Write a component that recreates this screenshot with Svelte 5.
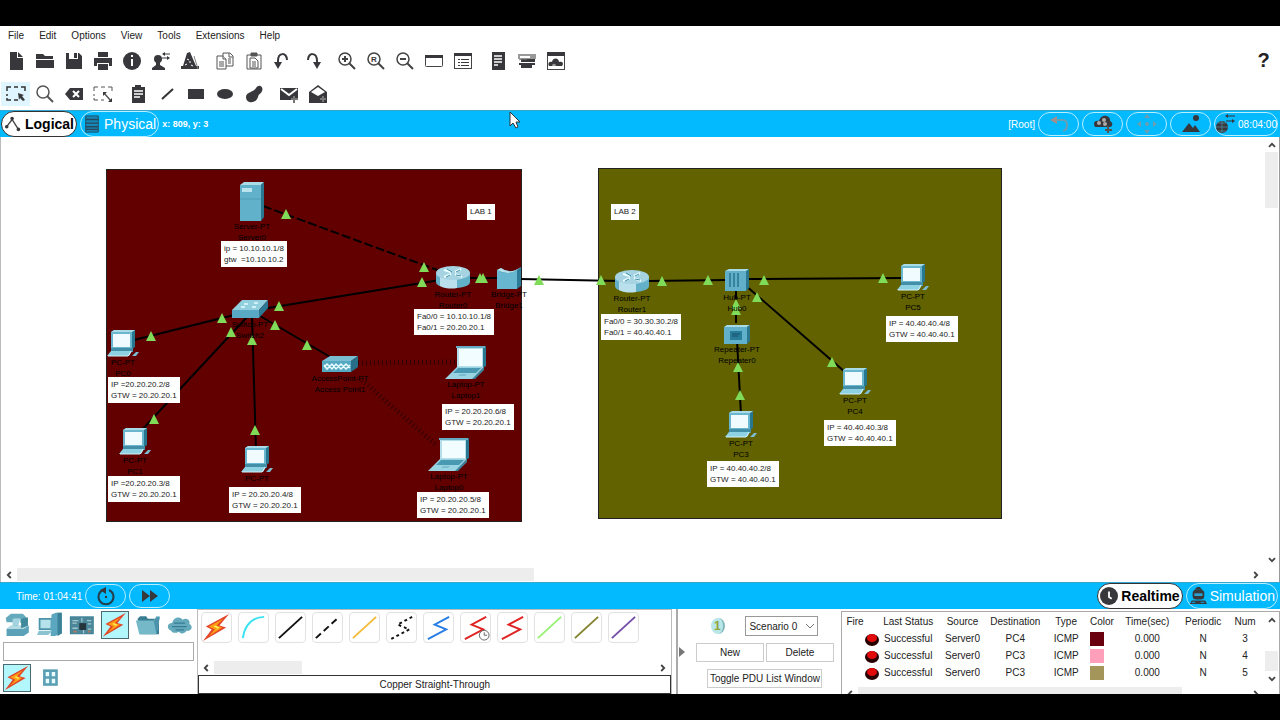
<script>
    const menus = ['File', 'Edit', 'Options', 'View', 'Tools', 'Extensions', 'Help'];

    // inner markup of each 20x20 icon
    const icons = {
        newFile: '<path d="M4 1h7v6h6v12H4z"/><path d="M12 1l5 5h-5z"/>',
        open: '<path d="M1 3h7l2 2h8v3H1z"/><path d="M1 9h18v8H1z"/>',
        save: '<path d="M2 2h3v6h9V2h1l3 3v13H2z"/><path d="M10 2h3v5h-3z"/>',
        print: '<path d="M5 1h10v5H5zM1 7h18v8h-3v-3H4v3H1zM5 13h10v6H5z"/>',
        info: '<circle cx="10" cy="10" r="9"/><path d="M9 8h2v7H9zM9 4h2v2H9z" fill="#fff"/>',
        user: '<circle cx="7" cy="8" r="4"/><path d="M5 10h4v4l5 3v2H1v-2l4-3z"/><path d="M12 3h7M11 7h7" stroke="#38383c"/><path d="M11 3l3-2v4zM19 7l-3-2v4z"/>',
        wizard: '<path d="M7 2l3-1 6 14h3v3H1v-3h2z"/><path d="M7 8l2 1M9 11h2M5 14l2-1M11 14l2 1" stroke="#fff"/><path d="M14 5l4 13" stroke="#888" stroke-width="1"/>',
        copy: '<g fill="#fff" stroke="#555"><path d="M8 2h7l3 3v10H8z"/><path d="M2 5h6l3 3v10H2z"/><path d="M8 5v3h3M4 11h5M4 13h5M4 15h5M14 2v4h4M13 8h3M13 10h3M13 12h3"/></g>',
        paste: '<g fill="#fff" stroke="#555"><path d="M3 4h14v14H3z"/><path d="M7 2h6v3H7z" fill="#555"/><path d="M6 7h5l3 3v7H6zM8 11h4M8 13h4M8 15h4"/></g>',
        undo: '<path d="M14 9c0-8-9-8-9 1v2" fill="none" stroke="#38383c" stroke-width="2"/><path d="M1 11h8l-4 7z"/>',
        redo: '<path d="M6 9c0-8 9-8 9 1v2" fill="none" stroke="#38383c" stroke-width="2"/><path d="M19 11h-8l4 7z"/>',
        zoomIn: '<g fill="none" stroke="#444"><circle cx="8" cy="8" r="6" stroke-width="1.5"/><path d="M12 12l6 6M5 8h6M8 5v6" stroke-width="2"/></g>',
        zoomReset: '<g fill="none" stroke="#444"><circle cx="8" cy="8" r="6" stroke-width="1.5"/><path d="M12 12l6 6" stroke-width="2"/></g><text x="8" y="11" font-size="8" font-weight="bold" text-anchor="middle">R</text>',
        zoomOut: '<g fill="none" stroke="#444"><circle cx="8" cy="8" r="6" stroke-width="1.5"/><path d="M12 12l6 6M5 8h6" stroke-width="2"/></g>',
        window: '<rect x="1.5" y="4.5" width="17" height="11" rx="1" fill="none" stroke="#444"/><path d="M1 4h18v3H1z"/>',
        list: '<rect x="1.5" y="2.5" width="17" height="15" fill="none" stroke="#444"/><path d="M1 2h18v3H1zM5 8h2v1H5zM5 11h2v1H5zM5 14h2v1H5zM8 8h8v1H8zM8 11h8v1H8zM8 14h8v1H8z"/>',
        doc: '<path d="M4 1h13v18H4z"/><path d="M6 5h8M6 8h8M6 11h8M6 14h4" stroke="#fff" stroke-width="1.5"/>',
        devices: '<path d="M1 3h18v5H1z" fill="#999"/><path d="M3 5h10v2H3z" fill="#fff"/><path d="M4 8h14v3H4z"/><path d="M2 12h16v2H2zM4 14h11v3H4z"/><path d="M2 9l3-1h5" stroke="#888"/>',
        cloudWin: '<rect x="1.5" y="1.5" width="17" height="17" fill="none" stroke="#444"/><path d="M1 1h18v4H1z"/><path d="M3 15c-2-4 2-5 3-4 1-5 7-4 7 0 4-1 5 2 3 4z"/><path d="M6 15c0-3 4-3 4 0z" fill="#999"/>',
        select: '<path d="M1 7V3h4M8 3h4M15 3h4v4M1 10v2M1 14v2h4M8 16h4" fill="none" stroke="#333" stroke-width="1.5"/><path d="M12 9l6 2-2 1 3 4-2 1-3-3-1 2z"/>',
        inspect: '<circle cx="8" cy="8" r="6" fill="none" stroke="#555" stroke-width="1.5"/><path d="M12 12l6 6" stroke="#555" stroke-width="2"/>',
        remove: '<path d="M1 10l5-6h13v12H6z"/><path d="M9 7l6 6M15 7l-6 6" stroke="#fff" stroke-width="2"/>',
        resize: '<path d="M1 7V3h4M8 3h4M15 3h4v4M1 10v2M1 14v2h4M8 16h3" fill="none" stroke="#555"/><path d="M11 9l7 8" stroke="#555" stroke-width="1.5"/><path d="M10 8h4l-4 4zM19 18v-4l-4 4z"/>',
        note: '<path d="M4 3h3V1h6v2h4v16H4z"/><path d="M6 7h9M6 10h9M6 13h6" stroke="#fff" stroke-width="1.5"/>',
        line: '<path d="M5 15L16 5" stroke="#333" stroke-width="2"/>',
        rect: '<path d="M2 5h16v10H2z"/>',
        ellipse: '<ellipse cx="10" cy="10" rx="8" ry="5"/>',
        freeform: '<path d="M12 4c3-5 8-1 6 3-1 3-3 2-4 6-2 7-12 7-12 0 0-5 8-5 10-9z"/>',
        mail: '<path d="M1 4h18v12H1z"/><path d="M2 5l8 6 8-6" fill="none" stroke="#fff" stroke-width="2"/><path d="M12 15h7M15 12v7" stroke="#777" stroke-width="2"/>',
        mailOpen: '<path d="M1 8l9-7 9 7v11H1z"/><path d="M3 8l7-5 7 5-7 4z" fill="#fff"/><path d="M12 15h6M15 12v6" stroke="#777" stroke-width="2"/>',
        logical: '<path d="M3 13l6-8 7 11" fill="none" stroke="#444" stroke-width="1.5"/><circle cx="3" cy="13" r="2"/><circle cx="9" cy="4" r="2"/><circle cx="16" cy="16" r="2"/>',
        physical: '<path d="M3 1h14v18H3z" fill="#1688b8" stroke="#26485c"/><path d="M3 5h14M3 9h14M3 13h14M3 16h14" stroke="#26485c" stroke-width="1.5"/>',
        back: '<path d="M1 6l7-4v8z" fill="#a08f8d"/><path d="M7 6h7q4 0 4 5t-4 6" fill="none" stroke="#6d9db0" stroke-width="2"/>',
        cloudAdd: '<path d="M2 13c-3-5 1-7 4-6 2-8 12-6 11 0 4 2 2 6 0 6z"/><g fill="#aaa"><circle cx="6" cy="9" r="2"/><circle cx="11" cy="6" r="2"/><circle cx="12" cy="10" r="2"/></g><path d="M12 16h7M15 12v7" stroke="#555" stroke-width="2"/>',
        move: '<path d="M10 0l3 4H7zM10 20l3-4H7zM0 10l4-3v6zM20 10l-4-3v6z" fill="#6d9db0"/><circle cx="10" cy="10" r="2" fill="#6d9db0"/>',
        landscape: '<path d="M1 18l7-9 4 5 2-3 5 7z"/><circle cx="15" cy="4" r="3"/>',
        globe: '<circle cx="7" cy="13" r="6"/><path d="M1 13h12M7 7v12M3 9h8M3 17h8" stroke="#5595ad" stroke-width=".7"/><path d="M12 2h8M11 7h8" stroke="#333"/><path d="M10 2l3-2v4zM20 7l-3-2v4z"/>',
        reset: '<path d="M7 4a7.5 7.5 0 1 0 6 0" fill="none" stroke="#23404c" stroke-width="2"/><path d="M10 1v7L4 4z"/><circle cx="10" cy="11" r="1.2"/>',
        forward: '<path d="M2 4l8 6-8 6zM10 4l8 6-8 6z"/>',
        clock: '<circle cx="10" cy="10" r="10"/><path d="M10 5v6l3 2" fill="none" stroke="#fff" stroke-width="2"/>',
        simulation: '<path d="M6 3l3-3h3l3 3z"/><rect x="4" y="3" width="13" height="11" rx="4"/><path d="M6 7h9v3H6z" fill="#2ba1d0"/><path d="M3 15h15l2 4H1z"/><path d="M3 17h4M13 17h4" stroke="#09b4f5"/>',
        left: '<path d="M13 5l-5 5 5 5" fill="none" stroke="#444" stroke-width="3"/>',
        right: '<path d="M7 5l5 5-5 5" fill="none" stroke="#444" stroke-width="3"/>',
        up: '<path d="M5 13l5-5 5 5" fill="none" stroke="#444" stroke-width="3"/>',
        down: '<path d="M5 7l5 5 5-5" fill="none" stroke="#444" stroke-width="3"/>',
    };

    const bolt = '<path d="M28 1L4 14l6 3-9 12 24-14-7-2z" fill="#e2452a"/><path d="M22 6L7 14l6 3-6 7 14-9-6-2z" fill="#ff9d13"/><path d="M17 11l-5 3 4 2-2 2 4-3-4-2z" fill="#ffec55"/>';

    // 30x30 drawings for the device categories
    const categoryIcons = {
        network: '<path d="M2 7l6-5h14l4 4v7h-7V8h-7v4H3z" fill="#65aabc"/><path d="M10 8h9l-3 10h-6z" fill="#a2d4df"/><path d="M3 20l5-4h21v8l-6 4H3z" fill="#5ba2b8"/><path d="M3 20l5-4h21l-6 4z" fill="#b4dbe4"/><path d="M20 8l8-2v10l-8 3z" fill="#3f899d"/>',
        end: '<path d="M3 8h14v12H3z" fill="#b5e2eb" stroke="#4b95aa" stroke-width="2"/><path d="M17 3l5-2h7v24l-8 3h-5V17z" fill="#5ba7bf"/><path d="M24 1h5v24l-5 3z" fill="#3b8298"/><path d="M2 22h16l-5 5H0z" fill="#8cc3d1"/>',
        board: '<path d="M1 5h28v21H1z" fill="#3c8298"/><path d="M2 6h26v19H2z" fill="#4b8699"/><path d="M12 13h8v8h-8z" fill="#26343b"/><path d="M4 10h7M4 13h5M21 10h5M22 14h4M4 19h6M22 20h4M15 7v5M17 21v4" stroke="#a3c9d0" stroke-width="1.5"/><path d="M5 22h4v2H5zM22 22h3v2h-3z" fill="#b67b5c"/>',
        bolt,
        folder: '<path d="M3 8l3-3h7l2 3h13v18H6z" fill="#387d92"/><path d="M1 10h21l3-5h4l-4 21H5z" fill="#75b9c8"/><path d="M22 11l3-5h4l-4 20z" fill="#4c94ab"/>',
        cloud: '<path d="M5 22c-6-2-5-9 1-9 2-8 10-8 12-4 5-3 10 1 8 5 5 2 3 9-3 8-3 4-7 4-9 1-4 2-8 2-9-1z" fill="#65aabc"/><path d="M8 13h13M6 17h17M10 21h10" stroke="#377d93" stroke-width="1.5"/>',
        grid: '<rect x="7" y="5" width="17" height="19" fill="#5a9fb4"/><path d="M10 8h4v5h-4zM17 8h4v5h-4zM10 16h4v5h-4zM17 16h4v5h-4z" fill="#e8fbff"/>',
    };

    const fileTools = [
        ['newFile', 'open', 'save', 'print', 'info', 'user', 'wizard'],
        ['copy', 'paste', 'undo', 'redo'],
        ['zoomIn', 'zoomReset', 'zoomOut', 'window', 'list'],
        ['doc', 'devices', 'cloudWin'],
    ];
    const drawTools = [
        ['select', 'inspect', 'remove', 'resize'],
        ['note', 'line', 'rect', 'ellipse', 'freeform'],
        ['mail', 'mailOpen'],
    ];
    const viewTools = ['back', 'cloudAdd', 'move', 'landscape'];

    const shapes = {
        server: { w: 26, h: 40, art: '<path d="M1 4l4-3h20l-3 3z" fill="#a9dbe7"/><path d="M1 4h21v36H1z" fill="#62b1cb"/><path d="M22 4l3-3v35l-3 4z" fill="#2b7790"/><path d="M3 7h10v4H3z" fill="#b9e4ee"/><path d="M1 18h21" stroke="#4e9db7"/>' },
        switch: { w: 38, h: 20, art: '<path d="M1 11L11 1h26l-9 10z" fill="#91cede"/><path d="M1 11h27v8H1z" fill="#5aa9c4"/><path d="M28 11l9-10v8l-9 10z" fill="#2d7993"/><path d="M13 5h4M23 4h4M10 8h4M21 8h4" stroke="#e5fbff" stroke-width="1.5"/>' },
        router: { w: 36, h: 24, art: '<path d="M1 8v9c0 8 34 8 34 0V8z" fill="#63b0c9"/><path d="M5 11v10c5 3 13 3 17 2V12z" fill="#b9e0ec"/><ellipse cx="18" cy="8" rx="17" ry="7" fill="#a5d3e1"/><path d="M9 5l7 2M20 9l7 3M26 4l-6 3M16 9l-7 3" stroke="#e9fcff" stroke-width="2"/><path d="M12 4l5 3M21 10l5 1M25 5l-4 2M15 10l-4 2" stroke="#3f8fa9"/>' },
        bridge: { w: 26, h: 22, art: '<path d="M1 3l4-2q9 7 20-1v19l-4 3H1z" fill="#2c7995"/><path d="M1 3q9 6 20 0v19H1z" fill="#68b7d0"/><path d="M1 3l4-2q9 7 20-1l-4 3q-9 6-20 0z" fill="#b8e1ec"/>' },
        hub: { w: 26, h: 24, art: '<path d="M1 3l4-2h20l-3 3z" fill="#a9dbe7"/><path d="M1 3h21v20H1z" fill="#62afca"/><path d="M22 3l3-2v19l-3 3z" fill="#2b7790"/><path d="M6 5v14M10 5v14M14 5v14" stroke="#297591" stroke-width="1.5"/>' },
        repeater: { w: 28, h: 20, art: '<path d="M1 3l3-2h23l-3 2z" fill="#a9dbe7"/><path d="M1 3h23v17H1z" fill="#62b1cb"/><path d="M24 3l3-2v16l-3 3z" fill="#2b7790"/><path d="M7 7h12v9H7z" fill="#287d9b"/><path d="M9 10h8M9 12h6" stroke="#17506b"/>' },
        ap: { w: 38, h: 18, art: '<path d="M1 6l8-5h28l-7 5z" fill="#79bdd1"/><path d="M1 6h29v11H1z" fill="#55a8c2"/><path d="M30 6l7-5v11l-7 5z" fill="#276f88"/><path d="M3 12l3-3 5 5 4-5 5 5 5-5 4 4M3 10l3 4 5-5 4 5 5-5 5 5 4-4" fill="none" stroke="#e9fcff" stroke-width="1.5"/>' },
        pc: { w: 32, h: 28, art: '<path d="M4 3l3-2h21v17l-4 3z" fill="#287790"/><path d="M4 3l3-2h21l-3 2z" fill="#a9dbe7"/><path d="M4 3h21v16H4z" fill="#6ab6cf"/><path d="M6 5h17v13H6z" fill="#effbff"/><path d="M4 19h22v4H4z" fill="#438fa8"/><path d="M4 22h21l-3 5H0z" fill="#8ed1e3"/><path d="M1 27h20l1-1 2-4" fill="none" stroke="#d4f1f7"/><path d="M25 27l4-4h3l-3 4z" fill="#7cbcd0"/>' },
        laptop: { w: 42, h: 34, art: '<path d="M12 2h26v20H12z" fill="#b4dfea"/><path d="M38 2l3-1v20l-3 2z" fill="#287790"/><path d="M11 1h29v2H11z" fill="#66aac1"/><path d="M14 4h23v17H14z" fill="#f1fdff"/><path d="M12 22h27L28 34H0z" fill="#9ad4e3"/><path d="M13 23h23l-5 5H8z" fill="#4999b3"/><path d="M15 29h7l-2 2h-7z" fill="#7bbdd0"/><path d="M39 22v3l-9 9h-3z" fill="#3c849b"/>' },
    };

    // cx is the centre of the device, y its top edge on the canvas
    const devices = [
        { shape: 'server', cx: 252, y: 44, name: 'Server-PT', label: 'Server0' },
        { shape: 'switch', cx: 250, y: 162, name: 'Switch-PT', label: 'Switch2' },
        { shape: 'pc', cx: 123, y: 192, name: 'PC-PT', label: 'PC0' },
        { shape: 'pc', cx: 135, y: 290, name: 'PC-PT', label: 'PC1' },
        { shape: 'pc', cx: 257, y: 308, name: 'PC-PT' },
        { shape: 'ap', cx: 340, y: 218, name: 'AccessPoint-PT', label: 'Access Point1' },
        { shape: 'laptop', cx: 466, y: 208, name: 'Laptop-PT', label: 'Laptop1' },
        { shape: 'laptop', cx: 449, y: 300, name: 'Laptop-PT', label: 'Laptop0' },
        { shape: 'router', cx: 453, y: 128, name: 'Router-PT', label: 'Router0' },
        { shape: 'bridge', cx: 509, y: 130, name: 'Bridge-PT', label: 'Bridge1' },
        { shape: 'router', cx: 632, y: 132, name: 'Router-PT', label: 'Router1' },
        { shape: 'hub', cx: 737, y: 131, name: 'Hub-PT', label: 'Hub0' },
        { shape: 'repeater', cx: 737, y: 187, name: 'Repeater-PT', label: 'Repeater0' },
        { shape: 'pc', cx: 741, y: 273, name: 'PC-PT', label: 'PC3' },
        { shape: 'pc', cx: 855, y: 230, name: 'PC-PT', label: 'PC4' },
        { shape: 'pc', cx: 913, y: 126, name: 'PC-PT', label: 'PC5' },
    ];

    const links = [
        { from: [263, 69], to: [440, 134], kind: 'cross', ports: [[286, 77], [424, 130]] },
        { from: [262, 172], to: [440, 143], ports: [[279, 169], [422, 145]] },
        { from: [238, 177], to: [130, 204], ports: [[222, 181], [151, 199]] },
        { from: [248, 179], to: [140, 295], ports: [[231, 195], [154, 282]] },
        { from: [252, 179], to: [256, 313], ports: [[252, 203], [255, 293]] },
        { from: [260, 179], to: [332, 221], ports: [[275, 188], [307, 208]] },
        { from: [358, 226], to: [455, 225], kind: 'wireless', ports: [] },
        { from: [362, 243], to: [436, 308], kind: 'wireless', ports: [] },
        { from: [470, 141], to: [500, 141], ports: [[480, 141], [483, 141]] },
        { from: [520, 142], to: [620, 144], ports: [[539, 143], [601, 143]] },
        { from: [648, 144], to: [728, 143], ports: [[662, 144], [708, 143]] },
        { from: [745, 142], to: [902, 141], ports: [[764, 143], [883, 141]] },
        { from: [745, 148], to: [845, 235], ports: [[757, 160], [832, 225]] },
        { from: [736, 153], to: [736, 191], kind: 'cross', ports: [[736, 167], [736, 173]] },
        { from: [737, 203], to: [741, 278], ports: [[738, 230], [740, 258]] },
    ];

    const notes = [
        { x: 221, y: 104, lines: ['ip = 10.10.10.1/8', 'gtw  =10.10.10.2'] },
        { x: 414, y: 172, lines: ['Fa0/0 = 10.10.10.1/8', 'Fa0/1 = 20.20.20.1'] },
        { x: 108, y: 240, lines: ['IP =20.20.20.2/8', 'GTW = 20.20.20.1'] },
        { x: 108, y: 339, lines: ['IP =20.20.20.3/8', 'GTW = 20.20.20.1'] },
        { x: 229, y: 350, lines: ['IP = 20.20.20.4/8', 'GTW = 20.20.20.1'] },
        { x: 442, y: 267, lines: ['IP = 20.20.20.6/8', 'GTW = 20.20.20.1'] },
        { x: 417, y: 355, lines: ['IP = 20.20.20.5/8', 'GTW = 20.20.20.1'] },
        { x: 601, y: 177, lines: ['Fa0/0 = 30.30.30.2/8', 'Fa0/1 = 40.40.40.1'] },
        { x: 707, y: 324, lines: ['IP = 40.40.40.2/8', 'GTW = 40.40.40.1'] },
        { x: 824, y: 283, lines: ['IP = 40.40.40.3/8', 'GTW = 40.40.40.1'] },
        { x: 886, y: 179, lines: ['IP = 40.40.40.4/8', 'GTW = 40.40.40.1'] },
        { x: 467, y: 67, lines: ['LAB 1'], title: true },
        { x: 611, y: 67, lines: ['LAB 2'], title: true },
    ];

    const zig = 'M26 4L11 12l12 5L4 27';
    const cables = [
        { name: 'Automatic', art: bolt },
        { name: 'Console', d: 'M4 26Q7 5 26 4', color: '#3be3f2' },
        { name: 'Copper Straight-Through', d: 'M3 26L27 4', color: '#111' },
        { name: 'Copper Cross-Over', d: 'M3 26L27 4', color: '#111', dash: '7 4' },
        { name: 'Fiber', d: 'M3 26L27 4', color: '#f2bb3c' },
        { name: 'Phone', d: zig, color: '#111', dash: '3 3' },
        { name: 'Coaxial', d: zig, color: '#287ee5' },
        { name: 'Serial DCE', d: zig, color: '#e02424', clock: true },
        { name: 'Serial DTE', d: zig, color: '#e02424' },
        { name: 'Octal', d: 'M3 26L27 4', color: '#98f174' },
        { name: 'IoT Custom', d: 'M3 26L27 4', color: '#83832f' },
        { name: 'USB', d: 'M3 26L27 4', color: '#744fa8' },
    ];

    const columns = [
        ['Fire', 37], ['Last Status', 58], ['Source', 51], ['Destination', 55], ['Type', 47],
        ['Color', 25], ['Time(sec)', 66], ['Periodic', 46], ['Num', 38],
    ];
    const pdus = [
        { destination: 'PC4', color: '#68000d', num: 3 },
        { destination: 'PC3', color: '#ff9fba', num: 4 },
        { destination: 'PC3', color: '#a4955b', num: 5 },
    ];

    let selectedTool = 'select';
    let selectedCategory = 'bolt';
    let search = '';
    let selectedCable = 'Copper Straight-Through';
    let scenario = 'Scenario 0';
</script>

{#snippet icon(name)}
    <svg class="icon" viewBox="0 0 20 20" fill="#38383c" aria-hidden="true">{@html icons[name]}</svg>
{/snippet}

{#snippet toolGroups(groups)}
    {#each groups as group}
        <div class="tool-group">
            {#each group as tool}
                <button class="tool" class:active={selectedTool === tool} aria-label={tool} on:click={() => (selectedTool = tool)}>
                    {@render icon(tool)}
                </button>
            {/each}
        </div>
    {/each}
{/snippet}

<div class="screen">
    <main class="app">
        <nav class="menu-bar">
            {#each menus as menu}
                <button>{menu}</button>
            {/each}
        </nav>

        <div class="toolbar">
            {@render toolGroups(fileTools)}
            <button class="tool help" aria-label="Help">?</button>
        </div>
        <div class="toolbar">
            {@render toolGroups(drawTools)}
        </div>

        <header class="bar">
            <button class="pill current">{@render icon('logical')}Logical</button>
            <button class="pill mode">{@render icon('physical')}Physical</button>
            <span class="coords">x: 809, y: 3</span>
            <span class="root">[Root]</span>
            {#each viewTools as tool}
                <button class="pill small" aria-label={tool}>{@render icon(tool)}</button>
            {/each}
            <button class="pill time">{@render icon('globe')}08:04:00</button>
            <svg class="cursor" viewBox="0 0 12 18"><path d="M1 1v14l3-3 3 5 2-1-2-5h4z" fill="#fff" stroke="#333"/></svg>
        </header>

        <section class="workspace">
            <div class="canvas">
                <div class="area lab1"></div>
                <div class="area lab2"></div>
                <svg class="links">
                    {#each links as link}
                        <line class={link.kind} x1={link.from[0]} y1={link.from[1]} x2={link.to[0]} y2={link.to[1]} />
                    {/each}
                    {#each links as link}
                        {#each link.ports as [x, y]}
                            <path class="port" d="M{x} {y - 5}l5 10h-10z" />
                        {/each}
                    {/each}
                </svg>
                {#each devices as device}
                    <div class="device" style="left: {device.cx - 40}px; top: {device.y}px">
                        <svg width={shapes[device.shape].w} height={shapes[device.shape].h}>{@html shapes[device.shape].art}</svg>
                        <span>{device.name}</span>
                        {#if device.label}
                            <span>{device.label}</span>
                        {/if}
                    </div>
                {/each}
                {#each notes as note}
                    <div class="note" class:title={note.title} style="left: {note.x}px; top: {note.y}px">
                        {#each note.lines as line}
                            <div>{line}</div>
                        {/each}
                    </div>
                {/each}
            </div>
            <div class="scroll vertical">
                <button aria-label="Scroll up">{@render icon('up')}</button>
                <div class="track"><div class="thumb" style="height: 14%"></div></div>
                <button aria-label="Scroll down">{@render icon('down')}</button>
            </div>
            <div class="scroll">
                <button aria-label="Scroll left">{@render icon('left')}</button>
                <div class="track"><div class="thumb" style="width: 42%"></div></div>
                <button aria-label="Scroll right">{@render icon('right')}</button>
            </div>
        </section>

        <div class="bar">
            <span class="clock">Time: 01:04:41</span>
            <button class="pill small" aria-label="Power cycle devices">{@render icon('reset')}</button>
            <button class="pill small" aria-label="Fast forward">{@render icon('forward')}</button>
            <button class="pill current realtime">{@render icon('clock')}Realtime</button>
            <button class="pill mode">{@render icon('simulation')}Simulation</button>
        </div>

        <footer class="bottom">
            <section class="palette">
                <div class="categories">
                    {#each ['network', 'end', 'board', 'bolt', 'folder', 'cloud'] as category}
                        <button class:active={selectedCategory === category} aria-label={category} on:click={() => (selectedCategory = category)}>
                            <svg viewBox="0 0 30 30">{@html categoryIcons[category]}</svg>
                        </button>
                    {/each}
                </div>
                <input type="text" aria-label="Search devices" bind:value={search} />
                <div class="categories">
                    <button class="active" aria-label="Connections"><svg viewBox="0 0 30 30">{@html categoryIcons.bolt}</svg></button>
                    <button aria-label="Structured cabling"><svg viewBox="0 0 30 30">{@html categoryIcons.grid}</svg></button>
                </div>
            </section>

            <section class="connections">
                <div class="cables">
                    {#each cables as cable}
                        <button aria-label={cable.name} on:click={() => (selectedCable = cable.name)}>
                            <svg viewBox="0 0 30 30">
                                {#if cable.art}
                                    {@html cable.art}
                                {:else}
                                    <path d={cable.d} fill="none" stroke={cable.color} stroke-width="2" stroke-dasharray={cable.dash} />
                                {/if}
                                {#if cable.clock}
                                    <circle cx="24" cy="23" r="5" fill="#fff" stroke="#666" />
                                    <path d="M24 20v3h3" fill="none" stroke="#666" />
                                {/if}
                            </svg>
                        </button>
                    {/each}
                </div>
                <div class="scroll">
                    <button aria-label="Scroll cables left">{@render icon('left')}</button>
                    <div class="track"><div class="thumb" style="width: 20%"></div></div>
                    <button aria-label="Scroll cables right">{@render icon('right')}</button>
                </div>
                <div class="cable-name">{selectedCable}</div>
            </section>

            <button class="splitter" aria-label="Collapse panel"><svg viewBox="0 0 6 10"><path d="M0 0l6 5-6 5z" fill="#777" /></svg></button>

            <section class="scenario">
                <div class="scenario-row">
                    <div class="badge">1</div>
                    <div class="picker">
                        <select aria-label="Scenario" bind:value={scenario}>
                            <option>Scenario 0</option>
                        </select>
                        <svg viewBox="0 0 8 6"><path d="M0 1l4 4 4-4" fill="none" stroke="#777" /></svg>
                    </div>
                </div>
                <div class="scenario-row pair">
                    <button>New</button>
                    <button>Delete</button>
                </div>
                <div class="scenario-row">
                    <button class="toggle">Toggle PDU List Window</button>
                </div>
            </section>

            <section class="pdu">
                <table>
                    <colgroup>
                        {#each columns as [, width]}
                            <col style="width: {width / 4.23}%" />
                        {/each}
                    </colgroup>
                    <thead>
                        <tr>
                            {#each columns as [title]}
                                <th>{title}</th>
                            {/each}
                        </tr>
                    </thead>
                    <tbody>
                        {#each pdus as pdu}
                            <tr>
                                <td class="fire"><svg viewBox="0 0 14 14"><ellipse cx="7" cy="8" rx="7" ry="6" fill="#290000" /><ellipse cx="7" cy="6" rx="5" ry="4" fill="#e20b0b" /></svg></td>
                                <td>Successful</td>
                                <td>Server0</td>
                                <td>{pdu.destination}</td>
                                <td>ICMP</td>
                                <td><div class="swatch" style="background: {pdu.color}"></div></td>
                                <td>0.000</td>
                                <td>N</td>
                                <td>{pdu.num}</td>
                            </tr>
                        {/each}
                    </tbody>
                </table>
                <div class="scroll vertical">
                    <button aria-label="Scroll list up">{@render icon('up')}</button>
                    <div class="track end"><div class="thumb" style="height: 45%"></div></div>
                    <button aria-label="Scroll list down">{@render icon('down')}</button>
                </div>
                <div class="scroll">
                    <button aria-label="Scroll list left">{@render icon('left')}</button>
                    <div class="track"><div class="thumb" style="width: 83%"></div></div>
                    <button aria-label="Scroll list right">{@render icon('right')}</button>
                </div>
            </section>
        </footer>
    </main>
</div>

<style>
    :global(body) {
        margin: 0;
        background: #000;
    }

    .screen {
        box-sizing: border-box;
        height: 100vh;
        min-height: 620px;
        padding: 26px 0;
        background: #000;
        font-family: "Liberation Sans", Arial, sans-serif;
        font-size: 10px;
        color: #222;
    }

    .app {
        display: flex;
        flex-direction: column;
        height: 100%;
        background: #fff;
        overflow: hidden;
    }

    button, input, select {
        box-sizing: border-box;
        margin: 0;
        padding: 0;
        border: 0;
        background: none;
        font: inherit;
        color: inherit;
    }

    svg {
        display: block;
        flex: none;
    }

    .icon {
        width: 20px;
        height: 20px;
    }

    .menu-bar {
        display: flex;
        gap: 15px;
        height: 18px;
        padding-left: 8px;
    }

    .toolbar {
        display: flex;
        gap: 6px;
        height: 33px;
        padding: 0 2px 0 1px;
        align-items: center;
    }

    .tool-group {
        display: flex;
    }

    .tool {
        display: flex;
        justify-content: center;
        align-items: center;
        width: 29px;
        height: 24px;
    }

    .tool.active {
        background: #dff5ff;
    }

    .help {
        margin-left: auto;
        font-size: 20px;
        font-weight: bold;
    }

    .bar {
        position: relative;
        display: flex;
        flex: none;
        align-items: center;
        gap: 3px;
        box-sizing: border-box;
        height: 27px;
        padding: 0 2px 0 1px;
        border-top: 1px solid #36a8d0;
        background: #03b9ff;
        color: #fff;
    }

    .pill {
        display: flex;
        justify-content: center;
        align-items: center;
        height: 24px;
        padding: 0 3px;
        border: 1px solid #b8eeff;
        border-radius: 12px;
        white-space: nowrap;
    }

    .pill.small {
        width: 41px;
    }

    .pill.current, .pill.mode {
        gap: 3px;
        height: 26px;
        padding: 0 2px;
        border-radius: 13px;
        font-size: 14px;
    }

    .pill.current .icon, .pill.mode .icon {
        width: 18px;
        height: 18px;
    }

    .pill.current {
        border-color: #333;
        background: #fff;
        color: #000;
        font-weight: bold;
    }

    .pill.time {
        width: 64px;
        gap: 3px;
        padding: 0 1px;
    }

    .coords {
        font-size: 9px;
        font-weight: bold;
    }

    .bar .root, .bar .realtime {
        margin-left: auto;
    }

    .clock {
        padding-left: 15px;
    }

    .cursor {
        position: absolute;
        left: 40%;
        top: 0;
        width: 12px;
        height: 18px;
        margin-left: -3px;
    }

    .workspace {
        display: grid;
        grid-template-columns: 1fr 15px;
        grid-template-rows: 1fr 15px;
        flex: 1;
        min-height: 0;
        border-left: 1px solid #bbb;
        border-right: 1px solid #999;
    }

    .canvas {
        position: relative;
        overflow: hidden;
        margin-left: -1px;
    }

    .area {
        position: absolute;
        box-sizing: border-box;
        border: 1px solid #222;
    }

    .lab1 {
        left: 106px;
        top: 32px;
        width: 416px;
        height: 353px;
        background: #620000;
    }

    .lab2 {
        left: 598px;
        top: 31px;
        width: 404px;
        height: 351px;
        background: #626200;
    }

    .links {
        position: absolute;
        width: 100%;
        height: 100%;
    }

    line {
        stroke: #000;
        stroke-width: 2;
    }

    .cross {
        stroke-dasharray: 9 3;
    }

    .wireless {
        stroke: #320000;
        stroke-width: 5;
        stroke-dasharray: 1 3;
    }

    .port {
        fill: #80dc58;
    }

    .device {
        position: absolute;
        display: flex;
        flex-direction: column;
        align-items: center;
        width: 80px;
        color: #000;
        font-size: 8px;
        line-height: 11px;
        white-space: nowrap;
    }

    .note {
        position: absolute;
        padding: 2px 3px;
        background: #fff;
        font-size: 8px;
        line-height: 11px;
        white-space: pre;
    }

    .note.title {
        line-height: 12px;
    }

    .scroll {
        display: flex;
        align-items: center;
        height: 15px;
    }

    .scroll button {
        flex: none;
        width: 16px;
        height: 15px;
    }

    .scroll .icon {
        width: 12px;
        height: 12px;
        margin: 0 auto;
    }

    .track {
        display: flex;
        flex: 1;
        height: 13px;
    }

    .thumb {
        width: 100%;
        height: 100%;
        background: #ededed;
    }

    .vertical {
        flex-direction: column;
        height: auto;
    }

    .vertical .track {
        width: 13px;
        flex-direction: column;
    }

    .track.end {
        justify-content: flex-end;
    }

    .bottom {
        display: flex;
        flex: none;
        height: 85px;
    }

    .palette {
        display: flex;
        flex-direction: column;
        gap: 3px;
        box-sizing: border-box;
        width: 197px;
        padding: 2px 3px;
    }

    .categories {
        display: flex;
        gap: 5px;
    }

    .categories button {
        width: 28px;
        height: 28px;
        border: 1px solid transparent;
    }

    .categories .active {
        border-color: #4b6970;
        background: #b2f7fb;
    }

    .palette input {
        width: 191px;
        height: 19px;
        border: 1px solid #aaa;
        padding: 0 4px;
    }

    .connections {
        display: flex;
        flex: 475;
        flex-direction: column;
        min-width: 0;
        border: 1px solid #bbb;
        border-bottom: 0;
        box-sizing: border-box;
    }

    .cables {
        display: flex;
        flex: 1;
        gap: 6px;
        padding: 2px 3px;
        overflow: hidden;
    }

    .cables button {
        flex: none;
        width: 31px;
        height: 31px;
        border: 1px solid #e2e2e2;
        border-radius: 4px;
    }

    .cable-name {
        box-sizing: border-box;
        height: 19px;
        border: 1px solid #333;
        line-height: 18px;
        text-align: center;
    }

    .splitter {
        flex: none;
        width: 12px;
        margin-left: 4px;
        border-left: 2px solid #aaa;
    }

    .splitter svg {
        width: 6px;
        height: 10px;
        margin-left: 1px;
    }

    .scenario {
        display: flex;
        flex: none;
        flex-direction: column;
        gap: 8px;
        box-sizing: border-box;
        width: 153px;
        padding: 8px 0 0;
    }

    .scenario-row {
        display: flex;
        justify-content: center;
        align-items: center;
        gap: 20px;
        height: 18px;
    }

    .scenario-row.pair {
        gap: 2px;
    }

    .scenario button {
        width: 68px;
        height: 19px;
        border: 1px solid #ccc;
        white-space: nowrap;
    }

    .scenario .toggle {
        width: 115px;
    }

    .badge {
        box-sizing: border-box;
        width: 14px;
        height: 16px;
        border-right: 2px solid #83b7ba;
        border-radius: 50%;
        background: #b9e6e8;
        color: #93a438;
        font-size: 12px;
        font-weight: bold;
        line-height: 16px;
        text-align: center;
    }

    .picker {
        position: relative;
    }

    .picker select {
        width: 73px;
        height: 20px;
        padding-left: 3px;
        border: 1px solid #999;
        appearance: none;
    }

    .picker svg {
        position: absolute;
        right: 4px;
        top: 7px;
        width: 8px;
        height: 6px;
        pointer-events: none;
    }

    .pdu {
        display: grid;
        grid-template-columns: 1fr 15px;
        grid-template-rows: 74px 15px;
        flex: 438;
        min-width: 0;
        margin-top: 2px;
        border: 1px solid #aaa;
        border-bottom: 0;
        overflow: hidden;
    }

    table {
        align-self: start;
        table-layout: fixed;
        width: 100%;
        border-collapse: collapse;
    }

    th, td {
        height: 17px;
        padding: 0;
        font-weight: normal;
        text-align: center;
        white-space: nowrap;
    }

    th {
        height: 18px;
    }

    th:first-child {
        padding-left: 4px;
        text-align: left;
    }

    .fire svg {
        width: 14px;
        height: 14px;
        margin-left: auto;
    }

    .swatch {
        width: 14px;
        height: 14px;
    }
</style>
